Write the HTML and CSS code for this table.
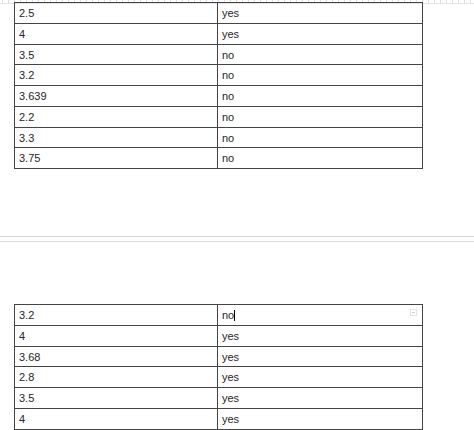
FILE: index.html
```html
<!DOCTYPE html>
<html>
<head>
<meta charset="utf-8">
<link rel="stylesheet" href="styles.css">
</head>
<body>
<div class="ruler"></div>
<div class="sheet">
  <div class="tbl">
    <div class="row"><div class="cell">2.5</div><div class="cell">yes</div></div>
    <div class="row"><div class="cell">4</div><div class="cell">yes</div></div>
    <div class="row"><div class="cell">3.5</div><div class="cell">no</div></div>
    <div class="row"><div class="cell">3.2</div><div class="cell">no</div></div>
    <div class="row"><div class="cell">3.639</div><div class="cell">no</div></div>
    <div class="row"><div class="cell">2.2</div><div class="cell">no</div></div>
    <div class="row"><div class="cell">3.3</div><div class="cell">no</div></div>
    <div class="row"><div class="cell">3.75</div><div class="cell">no</div></div>
  </div>
  <div class="pagebreak"></div>
  <div class="tbl tbl2">
    <div class="row"><div class="cell">3.2</div><div class="cell active">no<span class="caret"></span><span class="handle"></span></div></div>
    <div class="row"><div class="cell">4</div><div class="cell">yes</div></div>
    <div class="row"><div class="cell">3.68</div><div class="cell">yes</div></div>
    <div class="row"><div class="cell">2.8</div><div class="cell">yes</div></div>
    <div class="row"><div class="cell">3.5</div><div class="cell">yes</div></div>
    <div class="row"><div class="cell">4</div><div class="cell">yes</div></div>
  </div>
</div>
</body>
</html>
```
FILE: styles.css
```css
html, body {
  margin: 0;
  padding: 0;
  background: #ffffff;
  overflow: hidden;
}
body {
  width: 474px;
  height: 430px;
  position: relative;
  font-family: "Liberation Sans", Arial, sans-serif;
  font-size: 11px;
  color: #262626;
}
.ruler {
  position: absolute;
  left: 0;
  top: 0;
  width: 474px;
  height: 5px;
  background:
    linear-gradient(#e4e4e4, #e4e4e4) 0 3px / 100% 1px no-repeat,
    repeating-linear-gradient(90deg, #dedede 0 1px, transparent 1px 6px) 2px 0 / 100% 3px no-repeat;
}
.sheet {
  padding-top: 2px;
  padding-left: 14px;
}
.tbl {
  width: 407px;
  border: 1px solid #454545;
  border-bottom: none;
  position: relative;
}
.row {
  display: grid;
  grid-template-columns: 203px 1fr;
  height: 19.75px;
  border-bottom: 1px solid #454545;
}
.cell {
  padding-left: 4px;
  line-height: 20px;
  position: relative;
  white-space: nowrap;
}
.cell:first-child {
  border-right: 1px solid #454545;
}
.pagebreak {
  margin-top: 67px;
  margin-left: -14px;
  width: 474px;
  height: 4px;
  border-top: 1px solid #d6d6d6;
  border-bottom: 1px solid #dcdcdc;
}
.tbl2 {
  margin-top: 62px;
}
.caret {
  display: inline-block;
  width: 1px;
  height: 11px;
  background: #000;
  vertical-align: -2px;
}
.handle {
  position: absolute;
  right: 5px;
  top: 4px;
  width: 5px;
  height: 5px;
  border: 1px solid #e4e4e4;
  background: linear-gradient(#cfcfcf, #cfcfcf) 1px 2px / 3px 1px no-repeat;
}
```
